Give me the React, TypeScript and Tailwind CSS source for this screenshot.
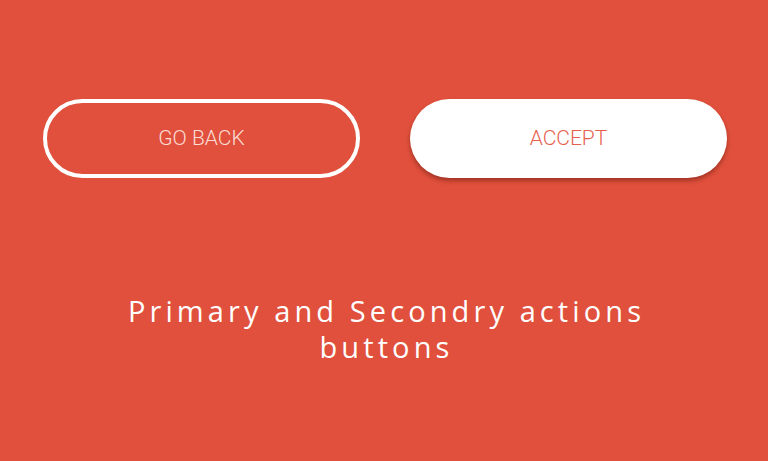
export default function App() {
  return (
    <div className="flex h-[461px] w-full flex-col items-center bg-[#e0503c] pt-[99px]">
      <div className="flex gap-[50px] pl-[2px]">
        <button className="flex h-[79px] w-[317px] items-center justify-center rounded-full border-4 border-white text-[21px] font-light text-[#fcdcd4] [font-family:Roboto,sans-serif]">
          GO BACK
        </button>
        <button className="flex h-[79px] w-[317px] items-center justify-center rounded-full bg-white text-[21px] font-light text-[#e5614f] shadow-[0_3px_4px_rgba(90,20,10,0.45)] [font-family:Roboto,sans-serif]">
          ACCEPT
        </button>
      </div>
      <p className="mt-[115px] pl-[5px] text-center text-[29px] leading-[36px] tracking-[4.1px] text-white [font-family:'Open_Sans',sans-serif]">
        Primary and Secondry actions
        <br />
        buttons
      </p>
    </div>
  );
}
